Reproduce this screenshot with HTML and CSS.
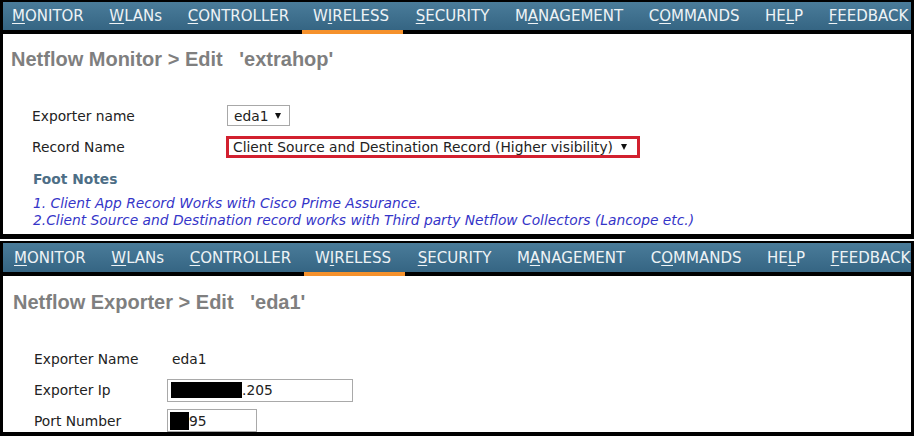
FILE: index.html
```html
<!DOCTYPE html>
<html lang="en">
<head>
  <meta charset="UTF-8">
  <meta name="viewport" content="width=device-width, initial-scale=1.0">
  <title>Netflow Monitor - Edit</title>
  <link rel="stylesheet" href="styles.css">
</head>
<body>
  <div class="panel panel-monitor">
    <ul class="menu">
      <li><u>M</u>ONITOR</li>
      <li><u>W</u>LANs</li>
      <li><u>C</u>ONTROLLER</li>
      <li class="active">W<u>I</u>RELESS</li>
      <li><u>S</u>ECURITY</li>
      <li>M<u>A</u>NAGEMENT</li>
      <li>C<u>O</u>MMANDS</li>
      <li>HE<u>L</u>P</li>
      <li><u>F</u>EEDBACK</li>
    </ul>
    <div class="content">
      <h2>Netflow Monitor &gt; Edit&nbsp;&nbsp;&nbsp;'extrahop'</h2>
      <div class="form">
        <div class="row">
          <span class="label">Exporter name</span>
          <span class="select">eda1</span>
        </div>
        <div class="row">
          <span class="label">Record Name</span>
          <span class="select highlight">Client Source and Destination Record (Higher visibility)</span>
        </div>
      </div>
      <h3 class="notes-title">Foot Notes</h3>
      <p class="note">1. Client App Record Works with Cisco Prime Assurance.</p>
      <p class="note">2.Client Source and Destination record works with Third party Netflow Collectors (Lancope etc.)</p>
    </div>
  </div>

  <div class="panel panel-exporter">
    <ul class="menu">
      <li><u>M</u>ONITOR</li>
      <li><u>W</u>LANs</li>
      <li><u>C</u>ONTROLLER</li>
      <li class="active">W<u>I</u>RELESS</li>
      <li><u>S</u>ECURITY</li>
      <li>M<u>A</u>NAGEMENT</li>
      <li>C<u>O</u>MMANDS</li>
      <li>HE<u>L</u>P</li>
      <li><u>F</u>EEDBACK</li>
    </ul>
    <div class="content">
      <h2>Netflow Exporter &gt; Edit&nbsp;&nbsp;&nbsp;'eda1'</h2>
      <div class="form">
        <div class="row">
          <span class="label">Exporter Name</span>
          <span class="value">eda1</span>
        </div>
        <div class="row">
          <span class="label">Exporter Ip</span>
          <span class="input ip"><span class="redact"></span>.205</span>
        </div>
        <div class="row">
          <span class="label">Port Number</span>
          <span class="input port"><span class="redact"></span>95</span>
        </div>
      </div>
    </div>
  </div>
</body>
</html>
```

FILE: styles.css
```css
* {
  margin: 0;
  padding: 0;
  box-sizing: border-box;
}

body {
  font-family: 'DejaVu Sans', Verdana, sans-serif;
  background: #fff;
  color: #222;
}

.panel {
  width: 914px;
  border: 3px solid #000;
  border-top-width: 2px;
  overflow: hidden;
}

.panel-monitor {
  height: 239px;
  border-bottom-width: 5px;
}

.panel-exporter {
  height: 195px;
  margin-top: 2px;
  border-bottom-width: 4px;
}

/* top menu bar */
.menu {
  list-style: none;
  display: flex;
  height: 32px;
  background: linear-gradient(#4a7c9a, #356583);
  border-bottom: 4px solid #000;
}

.panel-exporter .menu {
  height: 33px;
  padding-left: 2px;
}

.menu li {
  display: flex;
  align-items: center;
  padding: 0 12.75px;
  margin-bottom: -4px;
  border-bottom: 4px solid transparent;
  color: #eef3f6;
  font-size: 15px;
  white-space: nowrap;
}

.menu li:first-child {
  padding-left: 9px;
}

.menu li.active {
  padding: 0 14px 0 11px;
  border-bottom-color: #f5912c;
}

.menu u {
  text-underline-offset: 2px;
}

/* page body */
h2 {
  font: bold 20px/24px 'Liberation Sans', Arial, sans-serif;
  color: #7f7f7f;
  margin: 13px 0 0 8px;
}

.panel-exporter h2 {
  margin: 14px 0 0 10px;
}

.form {
  margin-top: 29px;
  padding-left: 29px;
}

.panel-exporter .form {
  margin-top: 30px;
  padding-left: 31px;
}

.row {
  display: flex;
  align-items: center;
  height: 31px;
  font-size: 13.8px;
}

.panel-exporter .row {
  height: 30.7px;
}

.label {
  width: 195px;
  flex-shrink: 0;
}

.panel-exporter .label {
  width: 133px;
}

.select {
  display: inline-flex;
  align-items: center;
  gap: 7px;
  height: 21px;
  padding: 0 8px 0 6px;
  border: 1px solid #a8a8a8;
  background: #fff;
  white-space: nowrap;
}

.select::after {
  content: "";
  border-left: 3.5px solid transparent;
  border-right: 3.5px solid transparent;
  border-top: 6px solid #111;
}

.select.highlight {
  height: 22px;
  margin-left: -1px;
  padding: 0 10px 0 4px;
  gap: 8px;
  border: 3px solid #d2202f;
}

.notes-title {
  font-size: 13.8px;
  font-weight: bold;
  line-height: 20px;
  color: #4d6e86;
  margin: 7px 0 0 30px;
}

.note {
  font-size: 13.8px;
  font-style: italic;
  line-height: 17px;
  color: #3535c8;
  padding-left: 30px;
}

.notes-title + .note {
  margin-top: 6px;
}

.value {
  margin-left: 5px;
}

.input {
  display: flex;
  align-items: center;
  height: 23px;
  border: 1px solid #a9a9a9;
  padding-left: 3px;
}

.input.ip {
  width: 186px;
}

.input.port {
  width: 90px;
  padding-left: 2px;
}

.redact {
  display: inline-block;
  background: #000;
  width: 71px;
  height: 16px;
}

.port .redact {
  width: 19px;
  height: 18px;
}
```
